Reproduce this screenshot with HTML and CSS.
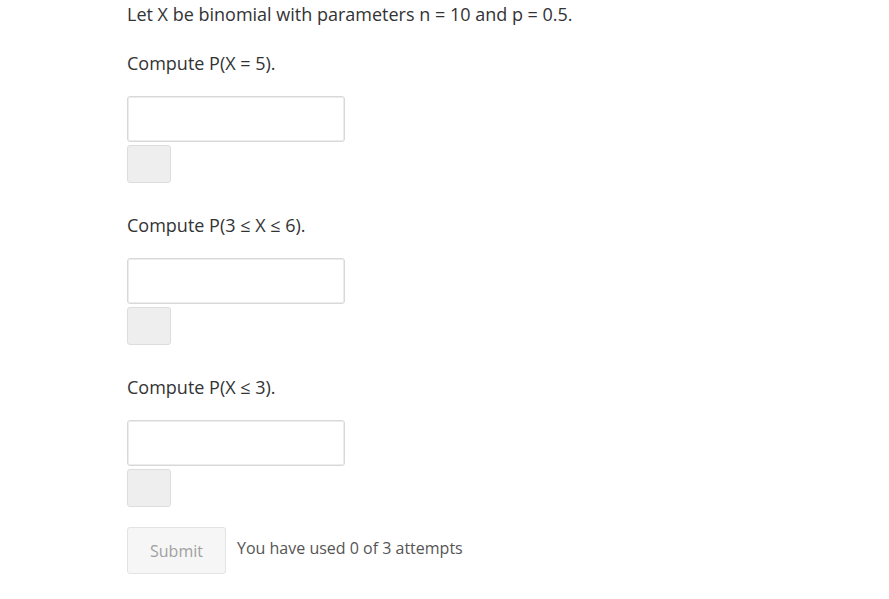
FILE: index.html
```html
<!DOCTYPE html>
<html>
<head>
<meta charset="utf-8">
<link rel="stylesheet" href="styles.css">
</head>
<body>
<div class="problem">
  <p class="text intro">Let X be binomial with parameters n = 10 and p = 0.5.</p>
  <div class="part">
    <p class="text">Compute P(X = 5).</p>
    <input class="answer" type="text">
    <button class="check" type="button"></button>
  </div>
  <div class="part">
    <p class="text">Compute P(3 ≤ X ≤ 6).</p>
    <input class="answer" type="text">
    <button class="check" type="button"></button>
  </div>
  <div class="part">
    <p class="text">Compute P(X ≤ 3).</p>
    <input class="answer" type="text">
    <button class="check" type="button"></button>
  </div>
  <div class="actions">
    <button class="submit" type="button">Submit</button>
    <span class="attempts">You have used 0 of 3 attempts</span>
  </div>
</div>
</body>
</html>
```
FILE: styles.css
```css
html, body {
  margin: 0;
  padding: 0;
  background: #fff;
}
body {
  font-family: "Open Sans", "Liberation Sans", sans-serif;
  color: #333;
}
.problem {
  padding: 2px 0 0 127px;
  display: flex;
  flex-direction: column;
}
.text {
  margin: 0;
  font-size: 18px;
  line-height: 24px;
}
.part {
  display: flex;
  flex-direction: column;
  align-items: flex-start;
  padding-top: 25px;
}
.part + .part {
  padding-top: 30px;
}
.part .text {
  margin-bottom: 21px;
}
.answer {
  box-sizing: border-box;
  width: 218px;
  height: 46px;
  margin: 0;
  border: 1px solid #d8d8d8;
  box-shadow: inset 0 0 0 1px #ececec;
  border-radius: 3px;
  background: #fff;
  padding: 0 8px;
  outline: none;
}
.check {
  box-sizing: border-box;
  width: 44px;
  height: 38px;
  margin: 3px 0 0 0;
  border: 1px solid #ddd;
  border-radius: 3px;
  background: #eee;
  padding: 0;
}
.actions {
  display: flex;
  align-items: center;
  margin-top: 20px;
}
.submit {
  box-sizing: border-box;
  width: 99px;
  height: 47px;
  margin: 0;
  border: 1px solid #e3e3e3;
  border-radius: 3px;
  background: #f6f6f6;
  color: #a0a0a0;
  font-family: "Open Sans", "Liberation Sans", sans-serif;
  font-size: 16px;
  padding: 0;
}
.attempts {
  margin-left: 11px;
  font-size: 16px;
  color: #555;
  position: relative;
  top: -3px;
}
```
